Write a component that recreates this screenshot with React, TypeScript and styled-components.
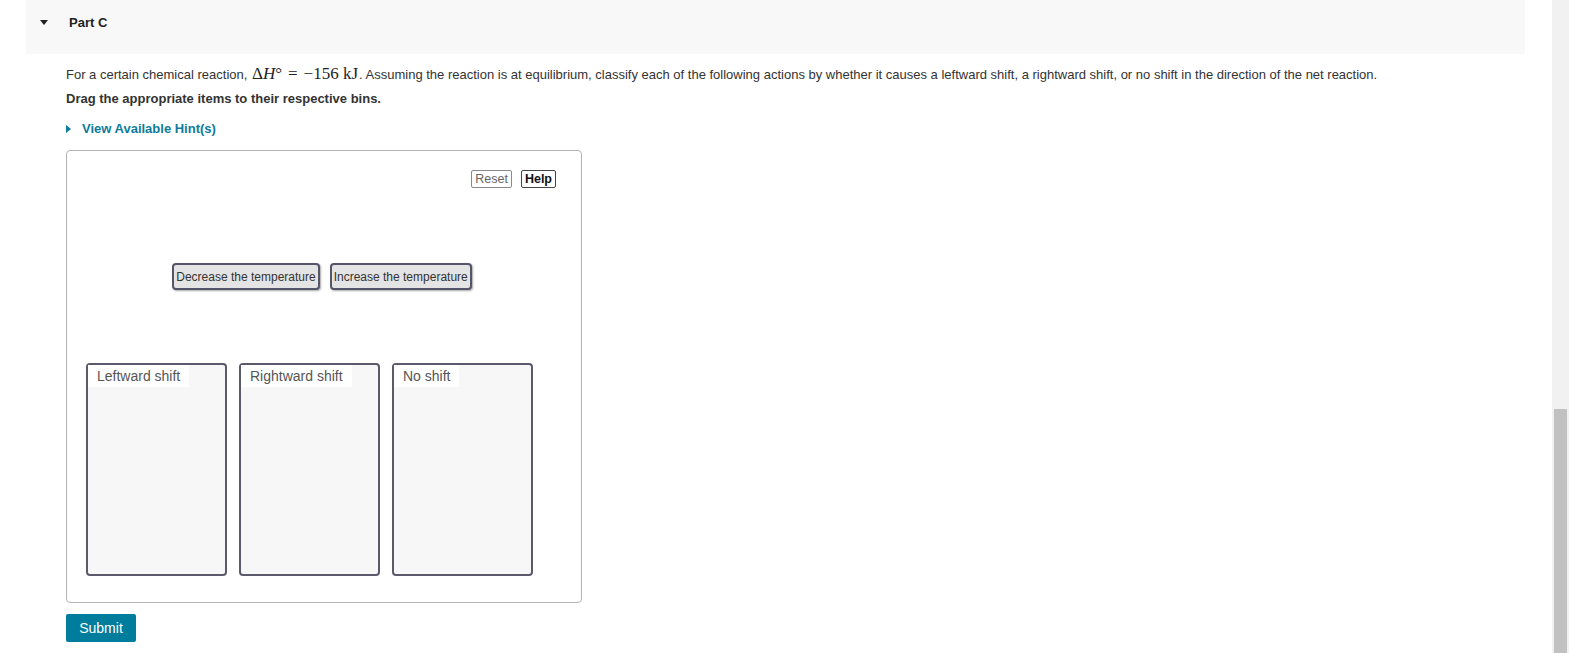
import React from 'react';
import styled, { createGlobalStyle } from 'styled-components';

const GlobalStyle = createGlobalStyle`
  html, body {
    margin: 0;
    padding: 0;
    background: #ffffff;
    font-family: "Liberation Sans", Arial, sans-serif;
    color: #333333;
  }
`

const Page = styled.div`
  display: flex;
  height: 653px;
  overflow: hidden;
`

const Main = styled.div`
  flex: 1;
  display: flex;
  flex-direction: column;
`

const Scrollbar = styled.div`
  width: 17px;
  background: #f1f1f1;
  display: flex;
  flex-direction: column;
  padding: 409px 2px 0 2px;
  box-sizing: border-box;
`

const Thumb = styled.div`
  flex: 1;
  background: #c1c1c1;
`

const PartHeader = styled.div`
  margin: 0 27px 0 26px;
  height: 54px;
  background: #f8f8f8;
  display: flex;
  align-items: center;
  padding: 0 0 10px 14px;
  box-sizing: border-box;
`

const Caret = styled.span<{ dir: 'down' | 'right' }>`
  display: inline-block;
  width: 0;
  height: 0;
  ${({ dir }) => dir === 'down' ? `
    border-left: 4px solid transparent;
    border-right: 4px solid transparent;
    border-top: 5px solid #222;
  ` : `
    border-top: 4px solid transparent;
    border-bottom: 4px solid transparent;
    border-left: 5px solid #0d7b9c;
  `}
`

const PartTitle = styled.h3`
  margin: 0 0 0 21px;
  font-size: 13px;
  font-weight: 700;
  color: #222;
`

const Content = styled.div`
  padding: 11px 0 0 66px;
  display: flex;
  flex-direction: column;
  align-items: flex-start;
`

const Prompt = styled.p`
  margin: 0;
  font-size: 13px;
  line-height: 17px;
  color: #333;
`

const Math = styled.span`
  font-family: "Liberation Serif", "Times New Roman", serif;
  font-size: 17px;
  color: #222;
  margin: 0 1px;
  i { font-style: italic; }
`

const MathOp = styled.span`
  margin: 0 6px;
`

const Instruction = styled.p`
  margin: 8px 0 0;
  font-size: 13px;
  line-height: 16px;
  font-weight: 700;
  color: #333;
`

const HintToggle = styled.div`
  margin-top: 14px;
  display: flex;
  align-items: center;
  gap: 11px;
  font-size: 13px;
  line-height: 16px;
  font-weight: 700;
  color: #0d7b9c;
`

const DragBox = styled.div`
  margin-top: 13px;
  width: 516px;
  height: 453px;
  box-sizing: border-box;
  border: 1px solid #b4b4b4;
  border-radius: 4px;
  display: flex;
  flex-direction: column;
  padding: 19px 25px 26px 19px;
`

const Toolbar = styled.div`
  display: flex;
  justify-content: flex-end;
  gap: 9px;
`

const ToolButton = styled.button<{ strong?: boolean }>`
  height: 18px;
  padding: 0 3px;
  font-family: "Liberation Sans", Arial, sans-serif;
  font-size: 12.5px;
  line-height: 14px;
  background: #fff;
  border-radius: 2px;
  ${({ strong }) => strong ? `
    border: 1px solid #444;
    color: #111;
    font-weight: 700;
  ` : `
    border: 1px solid #8a8a8a;
    color: #666;
  `}
`

const ItemRow = styled.div`
  margin-top: 75px;
  display: flex;
  justify-content: center;
  gap: 10px;
  padding-left: 2px;
`

const Item = styled.div`
  height: 27px;
  box-sizing: border-box;
  padding: 0 2px;
  display: flex;
  align-items: center;
  background: #e4e4e4;
  border: 2px solid #55556a;
  border-radius: 4px;
  box-shadow: 1px 1px 2px rgba(0, 0, 0, 0.35);
  font-size: 12px;
  color: #333;
  white-space: nowrap;
`

const Bins = styled.div`
  margin-top: 73px;
  display: flex;
  gap: 12px;
`

const Bin = styled.div`
  width: 141px;
  height: 213px;
  box-sizing: border-box;
  background: #f7f7f7;
  border: 2px solid #5a5a6c;
  border-radius: 4px;
  display: flex;
  align-items: flex-start;
`

const BinLabel = styled.div`
  background: #ffffff;
  height: 22px;
  display: flex;
  align-items: center;
  padding: 0 9px 0 9px;
  font-size: 14px;
  color: #555;
`

const Submit = styled.button`
  margin-top: 11px;
  width: 70px;
  height: 28px;
  border: none;
  border-radius: 2px;
  background: #007c9c;
  color: #ffffff;
  font-family: "Liberation Sans", Arial, sans-serif;
  font-size: 14px;
`

const items = ['Decrease the temperature', 'Increase the temperature'];
const bins = ['Leftward shift', 'Rightward shift', 'No shift'];

const App: React.FC = () => {
  return (
    <Page>
      <GlobalStyle />
      <Main>
        <PartHeader>
          <Caret dir="down" />
          <PartTitle>Part C</PartTitle>
        </PartHeader>
        <Content>
          <Prompt>
            For a certain chemical reaction, <Math>Δ<i>H</i>°<MathOp>=</MathOp>−156 kJ</Math>. Assuming the reaction is at equilibrium, classify each of the following actions by whether it causes a leftward shift, a rightward shift, or no shift in the direction of the net reaction.
          </Prompt>
          <Instruction>Drag the appropriate items to their respective bins.</Instruction>
          <HintToggle>
            <Caret dir="right" />
            View Available Hint(s)
          </HintToggle>
          <DragBox>
            <Toolbar>
              <ToolButton>Reset</ToolButton>
              <ToolButton strong>Help</ToolButton>
            </Toolbar>
            <ItemRow>
              {items.map((t) => <Item key={t}>{t}</Item>)}
            </ItemRow>
            <Bins>
              {bins.map((b) => (
                <Bin key={b}>
                  <BinLabel>{b}</BinLabel>
                </Bin>
              ))}
            </Bins>
          </DragBox>
          <Submit>Submit</Submit>
        </Content>
      </Main>
      <Scrollbar>
        <Thumb />
      </Scrollbar>
    </Page>
  );
}

export default App;
